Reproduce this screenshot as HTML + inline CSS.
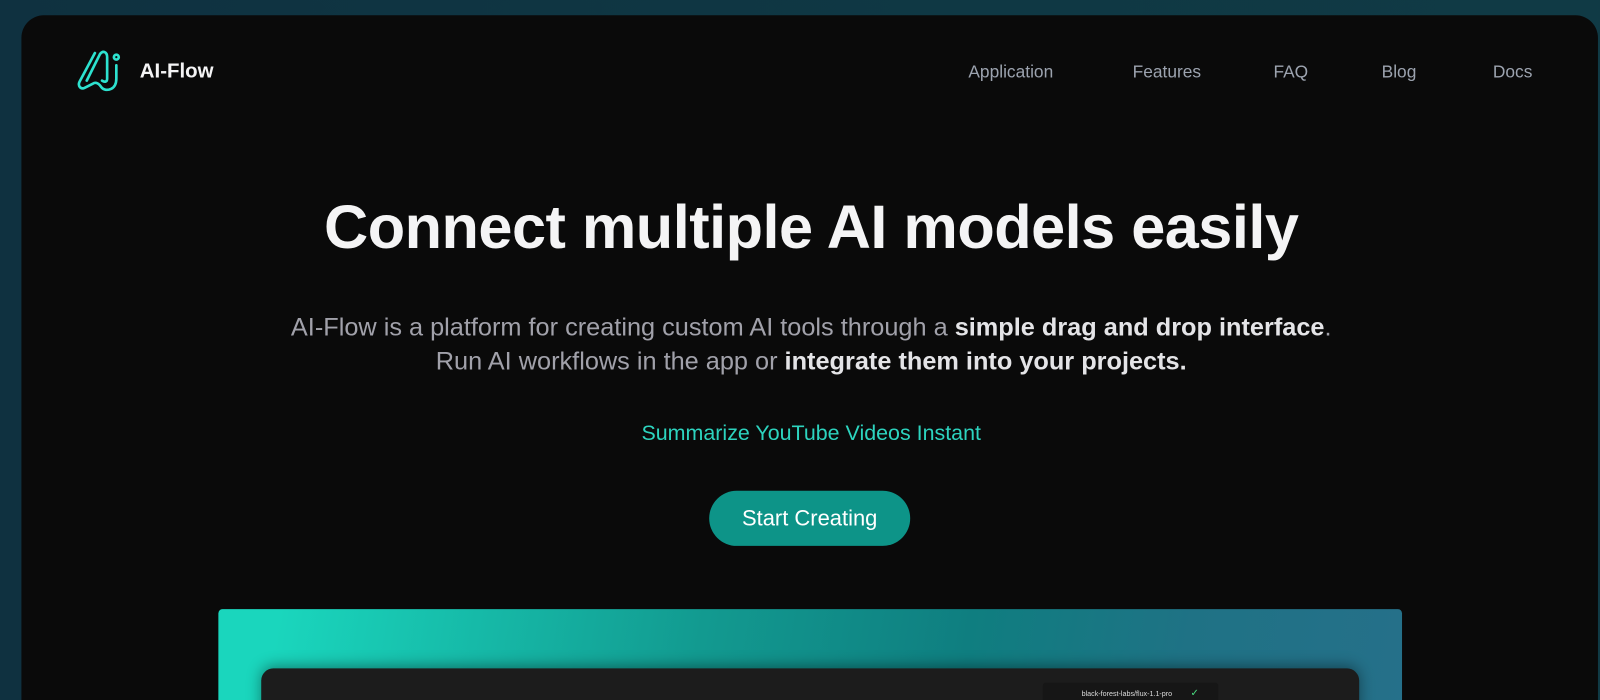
<!DOCTYPE html>
<html><head><meta charset="utf-8"><style>
*{margin:0;padding:0;box-sizing:border-box}
html,body{width:1600px;height:700px;overflow:hidden}
body{background:linear-gradient(90deg,#0f3140,#0f3844 60%,#103a45);font-family:"Liberation Sans",sans-serif;position:relative}
.wrap{position:absolute;left:0;top:0;width:1568px;height:686px;transform:scale(1.0204);transform-origin:0 0}
.card{position:absolute;left:21px;top:15px;width:1545px;height:720px;background:#0a0a0a;border-radius:22px;overflow:hidden}
.logo{position:absolute;left:52px;top:32px}
.brand{position:absolute;left:116px;top:44px;color:#f4f4f5;font-size:20px;font-weight:bold}
.nav{position:absolute;top:46px;color:#9ca3af;font-size:17px}
h1{position:absolute;left:0;width:1548px;top:173px;text-align:center;color:#f4f4f5;font-size:60px;font-weight:bold;letter-spacing:-0.5px}
.sub{position:absolute;left:0;width:1548px;top:290px;text-align:center;color:#a1a1aa;font-size:24.8px;line-height:33px}
.sub b{color:#e4e4e7}
.tag{position:absolute;left:0;width:1548px;top:398px;text-align:center;color:#2dd4bf;font-size:21px}
.btn{position:absolute;left:674px;top:466px;width:197px;height:54px;border-radius:27px;background:#0d9488;color:#fff;font-size:21.5px;text-align:center;line-height:54px}
.panel{position:absolute;left:193px;top:582px;width:1160px;height:200px;border-radius:4px;background:linear-gradient(100deg,#1ad6bd 5%,#129a90 40%,#0f7e80 62%,#1f7285 80%,#26708a)}
.inner{position:absolute;left:42px;top:58px;width:1076px;height:200px;background:#1c1c1c;border-radius:12px;box-shadow:0 -2px 14px rgba(0,0,0,.4)}
.chip{position:absolute;left:766px;top:14px;width:172px;height:22px;background:#161616;border-radius:3px;color:#ddd;font-size:7px;line-height:22px;padding-left:38px}
</style></head><body>
<div class="wrap">
<div class="card">
<svg class="logo" width="46" height="46" viewBox="0 0 46 46" fill="none" stroke="#2de2cf" stroke-width="2.6" stroke-linecap="round" stroke-linejoin="round">
<path d="M20 5 L5 33 C3 37 6 41 10 39 L18 35 C21 33 24 35 26 38 C28 41 32 42 36 40 C40 38 41 34 41 30 V17"/>
<path d="M25 6 L12 32 M25 6 C28 2 32 4 32 9 V30 C32 33 30 34 27 32"/>
<circle cx="41" cy="9" r="2.4"/>
</svg>
<div class="brand">AI-Flow</div>
<div class="nav" style="left:928px">Application</div>
<div class="nav" style="left:1089px">Features</div>
<div class="nav" style="left:1227px">FAQ</div>
<div class="nav" style="left:1333px">Blog</div>
<div class="nav" style="left:1442px">Docs</div>
<h1>Connect multiple AI models easily</h1>
<div class="sub">AI-Flow is a platform for creating custom AI tools through a <b>simple drag and drop interface</b>.<br>Run AI workflows in the app or <b>integrate them into your projects.</b></div>
<div class="tag">Summarize YouTube Videos Instant</div>
<div class="btn">Start Creating</div>
<div class="panel"><div class="inner"><div class="chip">black-forest-labs/flux-1.1-pro <span style="color:#4ade80;margin-left:16px;font-size:10px">✓</span></div></div></div>
</div>
</div>
</body></html>
